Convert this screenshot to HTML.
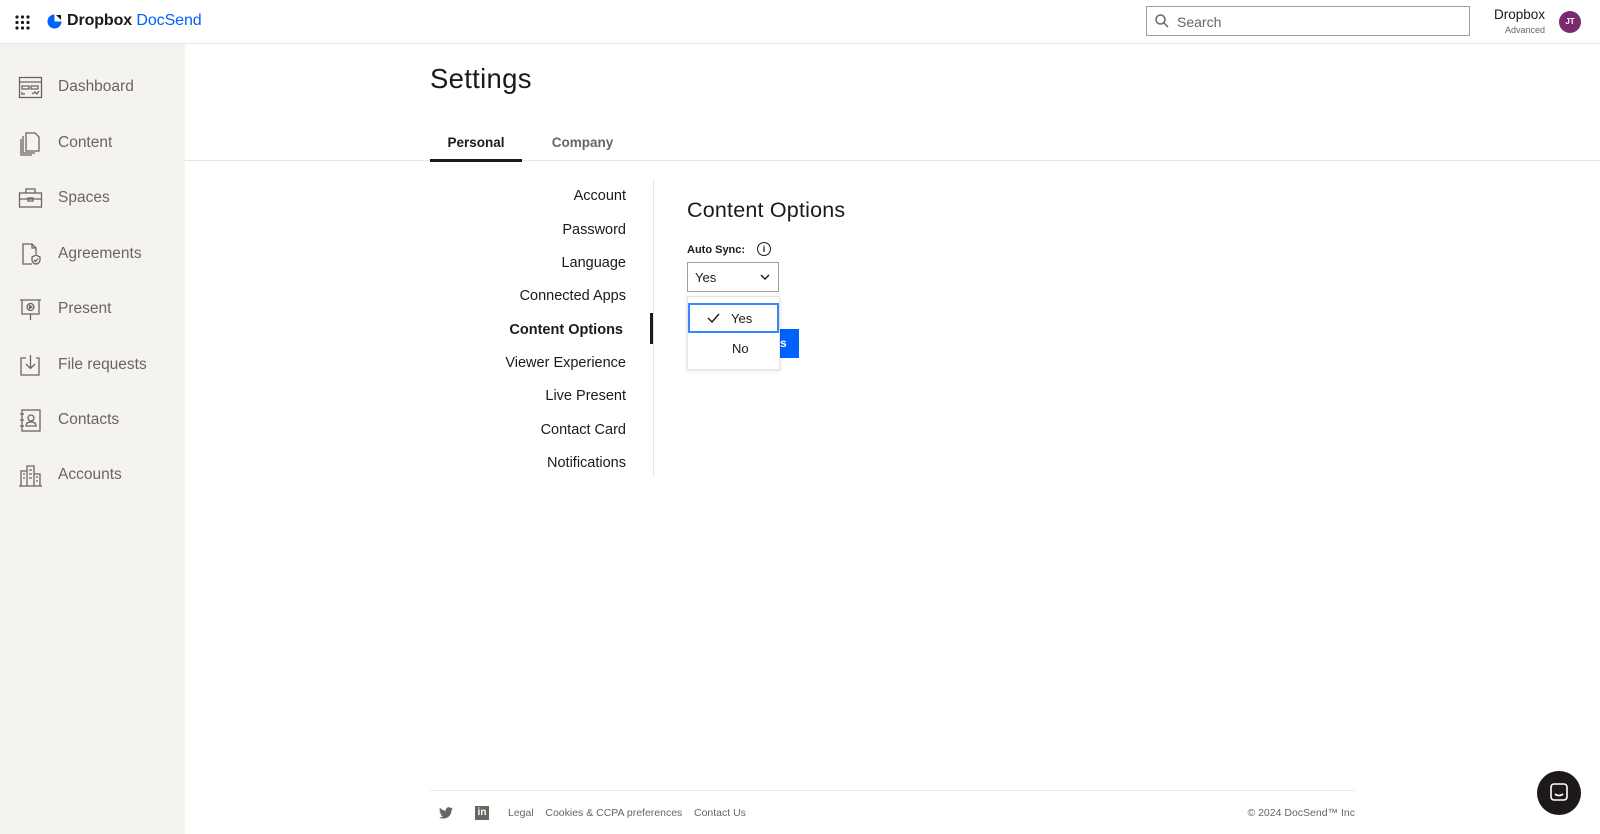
<!DOCTYPE html>
<html><head><style>
*{margin:0;padding:0;box-sizing:border-box}
body{width:1600px;height:834px;overflow:hidden;font-family:"Liberation Sans",sans-serif;background:#fff;position:relative;color:#1e1919}
.hdr{position:absolute;left:0;top:0;width:1600px;height:44px;border-bottom:1px solid #e6e4e1;background:#fff}
.side{position:absolute;left:0;top:44px;width:185px;height:790px;background:#f5f3f0}
.si{position:absolute;left:18px;height:26px;display:flex;align-items:center;font-size:15.5px;color:#6b6560}
.si svg{width:25px;height:25px;margin-right:15px}
.ab{position:absolute}
.nav{position:absolute;right:974px;font-size:14.5px;color:#1e1919;text-align:right;white-space:nowrap}
</style></head><body>
<div class="hdr">
<svg class="ab" style="left:15px;top:15px" width="15" height="15" viewBox="0 0 15 15" fill="#1e1919"><circle cx="2" cy="2" r="1.6"/><circle cx="7.5" cy="2" r="1.6"/><circle cx="13" cy="2" r="1.6"/><circle cx="2" cy="7.5" r="1.6"/><circle cx="7.5" cy="7.5" r="1.6"/><circle cx="13" cy="7.5" r="1.6"/><circle cx="2" cy="13" r="1.6"/><circle cx="7.5" cy="13" r="1.6"/><circle cx="13" cy="13" r="1.6"/></svg>
<svg class="ab" style="left:47px;top:14px" width="15" height="15" viewBox="0 0 15 15"><circle cx="7.5" cy="7.5" r="7" fill="#0061fe"/><path d="M7.5 0.5 L14.5 0.5 L14.5 7.5 L7.5 7.5Z" fill="#fff"/><path d="M9 1 L14 1 L14 6Z" fill="#1e1919"/></svg>
<div class="ab" style="left:67px;top:12px;font-size:16px;font-weight:bold;letter-spacing:-0.1px">Dropbox <span style="color:#0061fe;font-weight:normal">DocSend</span></div>
<div class="ab" style="left:1146px;top:6px;width:324px;height:30px;border:1px solid #a59e98"></div>
<svg class="ab" style="left:1155px;top:14px" width="14" height="14" viewBox="0 0 14 14" fill="none" stroke="#6b6560" stroke-width="1.5"><circle cx="5.5" cy="5.5" r="4.5"/><path d="M9 9l4 4"/></svg>
<div class="ab" style="left:1177px;top:14px;font-size:14px;color:#6b6560">Search</div>
<div class="ab" style="left:1480px;top:7px;font-size:13.5px;width:65px;text-align:right">Dropbox</div>
<div class="ab" style="left:1480px;top:25px;font-size:9px;color:#6b6560;width:65px;text-align:right">Advanced</div>
<div class="ab" style="left:1559px;top:11px;width:22px;height:22px;border-radius:50%;background:#7a2a6e;color:#fff;font-size:8px;font-weight:bold;text-align:center;line-height:22px">JT</div>
</div>
<div class="side">
<div class="si" style="top:30px"><svg viewBox="0 0 25 25" fill="none" stroke="#6b6560" stroke-width="1.3"><rect x="1.5" y="2.5" width="22" height="20"/><path d="M1.5 7h22M4 11h7v3H4zM13 11h7v3h-7zM4 20v-3M6 20v-2M14 19l3-2 2 2 2-3"/></svg>Dashboard</div>
<div class="si" style="top:86px"><svg viewBox="0 0 25 25" fill="none" stroke="#6b6560" stroke-width="1.3"><path d="M8 2h9l4 4v14H8z M5 5v17h12 M3 8v16h11"/></svg>Content</div>
<div class="si" style="top:141px"><svg viewBox="0 0 25 25" fill="none" stroke="#6b6560" stroke-width="1.3"><rect x="1.5" y="7" width="22" height="14"/><path d="M8 7V3h9v4M1.5 13h22M10 12h5v3h-5z"/></svg>Spaces</div>
<div class="si" style="top:197px"><svg viewBox="0 0 25 25" fill="none" stroke="#6b6560" stroke-width="1.3"><path d="M14 22H5V2h9l4 4v6M14 2v4h4"/><path d="M18 13l4 2v3c0 2-2 4-4 4s-4-2-4-4v-3z M16 18l1.5 1.5 2.5-3"/></svg>Agreements</div>
<div class="si" style="top:252px"><svg viewBox="0 0 25 25" fill="none" stroke="#6b6560" stroke-width="1.3"><path d="M2 3h21M4 3v14h17V3M12.5 17v6"/><circle cx="12.5" cy="10" r="3.5"/><path d="M11.5 8.5v3l2.5-1.5z"/></svg>Present</div>
<div class="si" style="top:308px"><svg viewBox="0 0 25 25" fill="none" stroke="#6b6560" stroke-width="1.3"><path d="M8 5H3v17h18V5h-3M12.5 2v13M8 11l4.5 4.5 4.5-4.5"/></svg>File requests</div>
<div class="si" style="top:363px"><svg viewBox="0 0 25 25" fill="none" stroke="#6b6560" stroke-width="1.3"><rect x="4" y="2" width="18" height="21"/><path d="M2 6h4M2 12h4M2 18h4"/><circle cx="13" cy="10" r="3"/><path d="M8 18c0-3 2-4 5-4s5 1 5 4z"/></svg>Contacts</div>
<div class="si" style="top:418px"><svg viewBox="0 0 25 25" fill="none" stroke="#6b6560" stroke-width="1.3"><path d="M1 23h23M3 23V8h6v15M9 23V3h7v20M16 23V11h6v12M5 11h2M5 15h2M11 7h3M11 11h3M11 15h3M18 14h2M18 18h2"/></svg>Accounts</div>
</div>
<div class="ab" style="left:430px;top:63px;font-size:27.5px;letter-spacing:0.3px">Settings</div>
<div class="ab" style="left:430px;top:135px;width:92px;text-align:center;font-size:13.5px;font-weight:bold">Personal</div>
<div class="ab" style="left:540px;top:135px;width:85px;text-align:center;font-size:13.5px;font-weight:bold;color:#6b6560">Company</div>
<div class="ab" style="left:185px;top:160px;width:1415px;height:1px;background:#e6e4e1"></div>
<div class="ab" style="left:430px;top:159px;width:92px;height:3px;background:#1e1919"></div>
<div class="nav" style="top:188px">Account</div>
<div class="nav" style="top:222px">Password</div>
<div class="nav" style="top:255px">Language</div>
<div class="nav" style="top:288px">Connected Apps</div>
<div class="nav" style="top:322px;font-weight:bold;right:977px">Content Options</div>
<div class="nav" style="top:355px">Viewer Experience</div>
<div class="nav" style="top:388px">Live Present</div>
<div class="nav" style="top:422px">Contact Card</div>
<div class="nav" style="top:455px">Notifications</div>
<div class="ab" style="left:653px;top:180px;width:1px;height:297px;background:#e6e4e1"></div>
<div class="ab" style="left:650px;top:313px;width:3px;height:31px;background:#1e1919"></div>
<div class="ab" style="left:687px;top:198px;font-size:21.5px;letter-spacing:0.2px">Content Options</div>
<div class="ab" style="left:687px;top:244px;font-size:11px;font-weight:bold">Auto Sync:</div>
<div class="ab" style="left:757px;top:242px;width:14px;height:14px;border:1.3px solid #1e1919;border-radius:50%;font-size:9px;font-weight:bold;text-align:center;line-height:12px">i</div>
<div class="ab" style="left:687px;top:262px;width:92px;height:30px;border:1px solid #a59e98"></div>
<div class="ab" style="left:695px;top:270px;font-size:13px">Yes</div>
<svg class="ab" style="left:760px;top:274px" width="10" height="6" viewBox="0 0 10 6" fill="none" stroke="#1e1919" stroke-width="1.4"><path d="M1 1l4 4 4-4"/></svg>
<div class="ab" style="left:770px;top:329px;width:29px;height:29px;background:#0061fe;color:#fff;font-size:12px;font-weight:bold;line-height:29px;padding-left:10px">s</div>
<div class="ab" style="left:687px;top:296px;width:93px;height:74px;background:#fff;border:1px solid #e6e4e1;box-shadow:0 1px 4px rgba(0,0,0,.12)"></div>
<div class="ab" style="left:688px;top:303px;width:91px;height:30px;border:2px solid #3a86ff"></div>
<svg class="ab" style="left:707px;top:313px" width="13" height="10" viewBox="0 0 13 10" fill="none" stroke="#1e1919" stroke-width="1.4"><path d="M1 5l4 4 7-8"/></svg>
<div class="ab" style="left:731px;top:311px;font-size:13px">Yes</div>
<div class="ab" style="left:732px;top:341px;font-size:13px">No</div>
<div class="ab" style="left:430px;top:790px;width:925px;height:1px;background:#eceae5"></div>
<svg class="ab" style="left:439px;top:807px" width="14" height="12" viewBox="0 0 24 20" fill="#6b6560"><path d="M24 2.4a10 10 0 0 1-2.8.8A5 5 0 0 0 23.3.4a10 10 0 0 1-3.1 1.2A4.9 4.9 0 0 0 11.8 6 14 14 0 0 1 1.7.9a4.9 4.9 0 0 0 1.5 6.6A4.9 4.9 0 0 1 1 6.9 4.9 4.9 0 0 0 4.9 11.8a5 5 0 0 1-2.2.1 4.9 4.9 0 0 0 4.6 3.4A9.9 9.9 0 0 1 0 17.3 14 14 0 0 0 7.5 19.5c9 0 14-7.5 14-14v-.6A10 10 0 0 0 24 2.4z"/></svg>
<div class="ab" style="left:475px;top:806px;width:14px;height:14px;background:#6b6560;color:#fff;font-size:10px;font-weight:bold;text-align:center;line-height:14px">in</div>
<div class="ab" style="left:508px;top:807px;font-size:10.5px;color:#6b6560;white-space:nowrap">Legal&nbsp;&nbsp;&nbsp;&nbsp;Cookies &amp; CCPA preferences&nbsp;&nbsp;&nbsp;&nbsp;Contact Us</div>
<div class="ab" style="left:1195px;top:807px;width:160px;text-align:right;font-size:10.5px;color:#6b6560">© 2024 DocSend™ Inc</div>
<div class="ab" style="left:1537px;top:771px;width:44px;height:44px;border-radius:50%;background:#1e1919"></div>
<svg class="ab" style="left:1550px;top:783px" width="18" height="20" viewBox="0 0 18 20" fill="none" stroke="#fff" stroke-width="1.6"><rect x="1" y="1" width="16" height="16" rx="3"/><path d="M5 11c2 2 6 2 8 0"/></svg>
</body></html>
